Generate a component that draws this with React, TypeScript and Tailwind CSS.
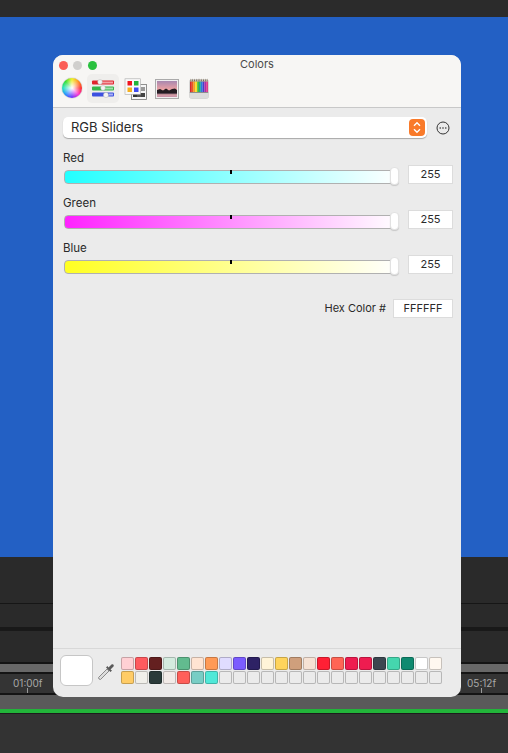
import React from "react";

const row1 = ["#ffd0d4","#ff5a5f","#642020","#d4ebdf","#62bb8f","#ffe4d2","#ff9a56","#e0dcff","#7b5cff","#2e2265","#fff4d8","#ffd45c","#cf9f7c","#f6e2d4","#ff2035","#ff6555","#ee1c50","#ee1c50","#3c4650","#45d6ae","#0f8a70","#ffffff","#fff8f0"];
const row2 = ["#ffcc66","#f0efea","#2b3b3a","#f2ebe8","#ff5f5a","#78cdc5","#50e8d8",...Array(16).fill("#ebebeb")];

function Slider({ label, grad }: { label: string; grad: string }) {
  return (
    <div className="flex flex-col h-[45px]">
      <div className="text-[11.5px] leading-[15px] text-[#2a2a2a] h-[16px]">{label}</div>
      <div className="flex items-start">
        <div className={`relative shrink-0 mt-[3px] ml-[1px] w-[335px] h-[14px] rounded-[4px] border border-[#b0b0b0] ${grad}`}>
          <div className="absolute left-[165px] -top-[1px] w-[2px] h-[4px] bg-black" />
          <div className="absolute -right-[1px] -top-[4px] w-[9px] h-[18px] rounded-[4px] bg-white border border-[#e2e2e2] shadow-[0_1px_1px_#c8c8c8]" />
        </div>
        <div className="shrink-0 -mt-[2px] ml-[9px] w-[45px] h-[19px] bg-white border border-[#dcdcdc] text-[11px] leading-[17px] text-center text-[#2a2a2a]">255</div>
      </div>
    </div>
  );
}

function SliderIcon() {
  return (
    <svg width="24" height="20" viewBox="0 0 24 20">
      <rect x="1" y="1.5" width="22" height="4" rx="1" fill="#e0222c" />
      <rect x="11" y="2.5" width="11" height="2" fill="#f3a0a4" />
      <rect x="1" y="7.5" width="22" height="4" rx="1" fill="#35b44a" />
      <rect x="14" y="8.5" width="8" height="2" fill="#a3dfae" />
      <rect x="1" y="13.5" width="22" height="4" rx="1" fill="#3c50e0" />
      <rect x="18" y="14.5" width="4" height="2" fill="#aab2f3" />
      <circle cx="9" cy="3" r="2.4" fill="#f4f4f4" stroke="#aaa" strokeWidth=".4" />
      <circle cx="12" cy="9" r="2.4" fill="#f4f4f4" stroke="#aaa" strokeWidth=".4" />
      <circle cx="15" cy="16" r="2.6" fill="#f4f4f4" stroke="#aaa" strokeWidth=".4" />
    </svg>
  );
}

function PaletteIcon() {
  return (
    <svg width="24" height="22" viewBox="0 0 24 22">
      <rect x="7.5" y="6.5" width="15" height="15" fill="#f6f6f6" stroke="#777" strokeWidth=".8" />
      <rect x="9" y="15" width="4" height="4" fill="#333" />
      <rect x="13" y="15" width="4" height="4" fill="#555" />
      <rect x="17" y="9" width="4" height="4" fill="#999" />
      <rect x="17" y="15" width="4" height="4" fill="#444" />
      <rect x="1" y="0.8" width="15.5" height="15.5" fill="#f8f8f8" stroke="#aaa" strokeWidth=".6" />
      <rect x="3.5" y="3" width="4.5" height="4.5" fill="#f0141e" />
      <rect x="10" y="3" width="4.5" height="4.5" fill="#22b33a" />
      <rect x="3.5" y="9.5" width="4.5" height="4.5" fill="#f5b01c" />
      <rect x="10" y="9.5" width="4.5" height="4.5" fill="#3f4cf0" />
    </svg>
  );
}

function ImageIcon() {
  return (
    <svg width="24" height="20" viewBox="0 0 24 20">
      <defs>
        <linearGradient id="sky" x1="0" y1="0" x2="0" y2="1">
          <stop offset="0" stopColor="#a888b0" />
          <stop offset="0.5" stopColor="#e8a0a4" />
          <stop offset="0.65" stopColor="#f0b8a8" />
          <stop offset="1" stopColor="#c890a8" />
        </linearGradient>
      </defs>
      <rect x=".5" y=".5" width="23" height="19" fill="#f0f0f0" stroke="#aaaaaa" />
      <rect x="2" y="2" width="20" height="16" fill="url(#sky)" />
      <path d="M2 11 L5 10 L8 11.5 L11 9.5 L14 11.5 L17 10 L20 9.5 L22 11 V14.5 H2 Z" fill="#241c22" />
      <rect x="2" y="14" width="20" height="1.2" fill="#5a4450" />
    </svg>
  );
}

function PencilIcon() {
  const cols = ["#d8262c","#ee5a1c","#f6a01e","#f6e21e","#48b83c","#18a88c","#2a78e0","#4a3cc8","#b02ca8","#e03a8a"];
  return (
    <svg width="20" height="21" viewBox="0 0 20 21">
      <rect x=".5" y="1.5" width="19" height="19" rx="2" fill="#ededed" stroke="#c4c4c4" strokeWidth=".6" />
      {cols.map((c, i) => (
        <g key={i}>
          <rect x={1 + i * 1.8} y="3.5" width="1.8" height="10.5" fill={c} />
          <path d={`M${1.1 + i * 1.8} 3.5 L${1.9 + i * 1.8} .5 L${2.7 + i * 1.8} 3.5 Z`} fill="#7a6a50" />
        </g>
      ))}
      <rect x=".8" y="14" width="18.4" height="1" fill="#8e8e8e" />
      <rect x=".8" y="15" width="18.4" height="5" fill="#dcdcdc" />
    </svg>
  );
}

export default function App() {
  return (
    <div className="relative w-[508px] h-[753px] overflow-hidden bg-[#333333] font-['Inter','Liberation_Sans',sans-serif]">
      <div className="h-[17px] bg-[#2b2b2b]" />
      <div className="h-[540px] bg-[#2360c4]" />
      <div className="h-[47px] bg-[#2a2a2a] border-b border-[#161616]" />
      <div className="h-[23px] bg-[#2a2a2a]" />
      <div className="h-[4px] bg-[#191919]" />
      <div className="h-[33px] bg-[#2a2a2a] border-b-2 border-[#141414]" />
      <div className="h-[8px] bg-[#686868] box-content border-b-2 border-[#141414]" />
      <div className="h-[19px] bg-[#343434] flex justify-between px-[13px] text-[#a8a8a8] text-[10px] leading-[18px]">
        <div className="relative w-[28px]">
          01:00f
          <div className="absolute left-[14px] top-[14px] w-px h-[5px] bg-[#999999]" />
        </div>
        <div className="relative w-[28px]">
          05:12f
          <div className="absolute left-[14px] top-[14px] w-px h-[5px] bg-[#999999]" />
        </div>
      </div>
      <div className="h-[16px] bg-[#5a5a5a] border-t-2 border-[#141414]" />
      <div className="h-[4px] bg-[#22b53a]" />
      <div className="h-[40px] bg-[#333333] border-t border-[#1c1c1c]" />

      <div className="absolute left-[53px] top-[55px] w-[408px] h-[642px] rounded-[10px] overflow-hidden bg-[#ebebeb] flex flex-col">
        <div className="h-[53px] bg-[#f7f6f4] border-b border-[#c8c8c8] relative shrink-0">
          <div className="flex h-[18px] items-center pl-[5.5px] pt-[2px] gap-[5.5px]">
            <div className="w-[9px] h-[9px] rounded-full bg-[#fb5d56]" />
            <div className="w-[9px] h-[9px] rounded-full bg-[#d0cfcd]" />
            <div className="w-[9px] h-[9px] rounded-full bg-[#2ac13f]" />
            <div className="absolute left-0 right-0 top-[2px] text-center text-[11px] leading-[14px] text-[#4a4a4a]">Colors</div>
          </div>
          <div className="flex items-center h-[29px] mt-[1px]">
            <div className="ml-[9px] -mt-[1px] w-[20px] h-[20px] rounded-full shadow-[0_0_1px_#666] bg-[radial-gradient(circle,#ffffff_0%,#ffffffcc_15%,#ffffff00_65%),conic-gradient(from_90deg,#ff2a2a,#ff30d0,#7030ff,#2090ff,#20e0c0,#30e030,#f0f020,#ff9020,#ff2a2a)]" />
            <div className="ml-[5px] w-[32px] h-[29px] rounded-[5px] bg-[#efeeec] flex items-center justify-center">
              <SliderIcon />
            </div>
            <div className="ml-[5px]"><PaletteIcon /></div>
            <div className="ml-[7px]"><ImageIcon /></div>
            <div className="ml-[10px]"><PencilIcon /></div>
          </div>
        </div>

        <div className="flex-1 flex flex-col pl-[10px] pr-[8px] pt-[9px]">
          <div className="flex items-center h-[21px]">
            <div className="relative w-[364px] h-[21px] bg-white rounded-[5px] shadow-[0_1px_1px_#a8a8a8] pl-[8px] text-[13px] leading-[20px] text-[#2a2a2a]">
              RGB Sliders
              <div className="absolute right-[2px] top-[2px] w-[16px] h-[17px] rounded-[4px] bg-[#f97a2a] flex items-center justify-center">
                <svg width="8" height="13" viewBox="0 0 8 13" fill="none" stroke="white" strokeWidth="1.4">
                  <path d="M1 4.8 L4 1.8 L7 4.8" />
                  <path d="M1 8.2 L4 11.2 L7 8.2" />
                </svg>
              </div>
            </div>
            <svg className="ml-[9px]" width="14" height="14" viewBox="0 0 14 14" fill="none">
              <circle cx="7" cy="7" r="6" stroke="#333" strokeWidth="1" />
              <circle cx="4.2" cy="7" r=".8" fill="#333" />
              <circle cx="7" cy="7" r=".8" fill="#333" />
              <circle cx="9.8" cy="7" r=".8" fill="#333" />
            </svg>
          </div>

          <div className="mt-[13px] flex flex-col">
            <Slider label="Red" grad="bg-linear-to-r/srgb from-[#22ffff] to-white" />
            <Slider label="Green" grad="bg-linear-to-r/srgb from-[#ff22ff] to-white" />
            <Slider label="Blue" grad="bg-linear-to-r/srgb from-[#ffff22] to-white" />
          </div>

          <div className="flex items-center justify-end mt-[13px] h-[19px]">
            <span className="text-[11px] text-[#2a2a2a]">Hex Color #</span>
            <div className="ml-[7px] w-[60px] h-[19px] bg-white border border-[#dcdcdc] text-[11px] leading-[17px] text-center text-[#2a2a2a]">FFFFFF</div>
          </div>
        </div>

        <div className="h-[49px] border-t border-[#d8d8d8] flex shrink-0 relative">
          <div className="ml-[7px] mt-[6px] w-[33px] h-[31px] bg-white rounded-[6px] border border-[#c6c6c6]" />
          <svg className="ml-[4px] mt-[14px]" width="18" height="18" viewBox="0 0 18 18" fill="none">
            <path d="M2 16 L1.5 14.5 L10 6 L12 8 L3.5 16.5 Z" fill="#dcdcdc" stroke="#8a8a8a" strokeWidth="1" />
            <path d="M9 4.5 L13.5 9 L15 7.5 L13.5 6.5 L16.5 3.5 C17.5 2 16 .5 14.5 1.5 L11.5 4.5 L10.5 3 Z" fill="#5a5a5a" />
          </svg>
          <div className="absolute left-[68px] top-[8px] grid grid-cols-[repeat(23,13px)] gap-px">
            {[...row1, ...row2].map((c, i) => (
              <div key={i} className="w-[13px] h-[13px] rounded-[2px] border border-[#00000038]" style={{ backgroundColor: c }} />
            ))}
          </div>
        </div>
      </div>
    </div>
  );
}
